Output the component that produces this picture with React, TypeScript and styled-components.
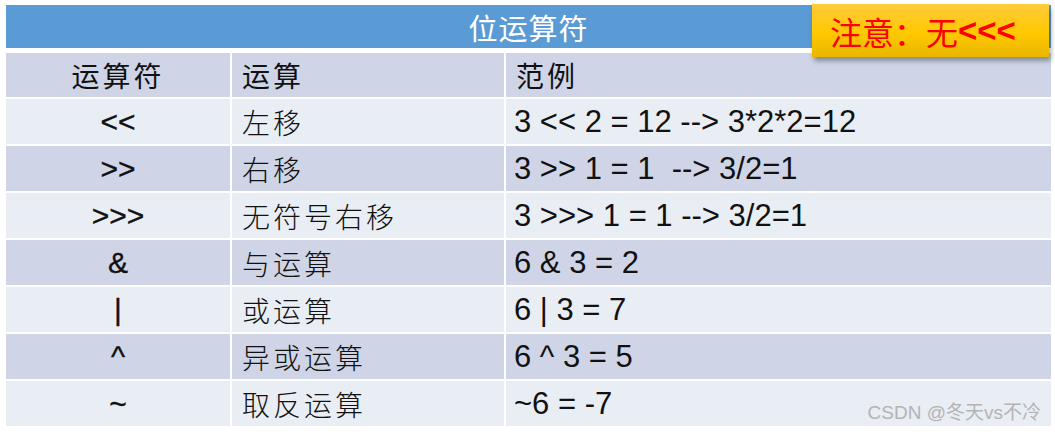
import React from "react";
import styled, { createGlobalStyle } from "styled-components";

const Global = createGlobalStyle`
  html, body { margin: 0; padding: 0; background: #ffffff; }
  body { width: 1055px; height: 432px; overflow: hidden; }
`;

const Page = styled.div`
  position: relative;
  width: 1055px;
  height: 432px;
  padding: 5px 4px 0 6px;
  box-sizing: border-box;
`;

const TitleBar = styled.div`
  height: 43px;
  margin-bottom: 5px;
  background: #5b9bd5;
  color: #ffffff;
  display: flex;
  align-items: center;
  justify-content: center;
  font-family: "Noto Sans CJK SC", sans-serif;
  font-size: 29px;
  letter-spacing: 1px;
`;

const Table = styled.div`
  display: grid;
  grid-template-columns: 224px 272px 545px;
  grid-template-rows: 44px repeat(7, 45px);
  column-gap: 2px;
  row-gap: 2px;
`;

const Cell = styled.div<{ $tone: "head" | "light" | "dark"; $center?: boolean; $kind: "op" | "cn" | "ex" }>`
  background: ${(p) => (p.$tone === "light" ? "#e9edf4" : "#cfd5e7")};
  color: #111111;
  display: flex;
  align-items: center;
  justify-content: ${(p) => (p.$center ? "center" : "flex-start")};
  padding-left: ${(p) => (p.$center ? "0" : p.$kind === "ex" ? "8px" : "10px")};
  font-family: ${(p) =>
    p.$kind === "cn" ? `"Noto Sans CJK SC", sans-serif` : `"Liberation Sans", Arial, sans-serif`};
  font-size: ${(p) => (p.$kind === "cn" ? "28px" : p.$kind === "ex" ? "31px" : "30px")};
  font-weight: ${(p) => (p.$kind === "cn" && p.$tone !== "head" ? 300 : 400)};
  letter-spacing: ${(p) => (p.$kind === "cn" ? "3px" : "0")};
  white-space: pre;
  -webkit-text-stroke: ${(p) => (p.$kind === "op" ? "0.35px #111" : "0")};
`;

const Note = styled.div`
  position: absolute;
  left: 812px;
  top: 4px;
  width: 237px;
  height: 53px;
  box-sizing: border-box;
  background: linear-gradient(#ffcb3c, #ffc800 55%, #e9b600);
  box-shadow: 2px 4px 5px rgba(0, 0, 0, 0.35);
  display: flex;
  align-items: center;
  padding-left: 18px;
  color: #ff0000;
  font-family: "Noto Sans CJK SC", sans-serif;
  font-size: 32px;
`;

const Arrows = styled.span`
  font-family: "Liberation Sans", Arial, sans-serif;
  font-weight: 700;
  font-size: 33px;
`;

const Watermark = styled.div`
  position: absolute;
  right: 14px;
  bottom: 8px;
  font-family: "Liberation Sans", "Noto Sans CJK SC", sans-serif;
  font-size: 19px;
  color: #b4b4b4;
`;

const rows: [string, string, string][] = [
  ["<<", "左移", "3 << 2 = 12 --> 3*2*2=12"],
  [">>", "右移", "3 >> 1 = 1  --> 3/2=1"],
  [">>>", "无符号右移", "3 >>> 1 = 1 --> 3/2=1"],
  ["&", "与运算", "6 & 3 = 2"],
  ["|", "或运算", "6 | 3 = 7"],
  ["^", "异或运算", "6 ^ 3 = 5"],
  ["~", "取反运算", "~6 = -7"],
];

export default function App() {
  return (
    <Page>
      <Global />
      <TitleBar>位运算符</TitleBar>
      <Table>
        <Cell $tone="head" $kind="cn" $center>运算符</Cell>
        <Cell $tone="head" $kind="cn">运算</Cell>
        <Cell $tone="head" $kind="cn">范例</Cell>
        {rows.map(([op, name, ex], i) => {
          const tone = i % 2 === 0 ? "light" : "dark";
          return (
            <React.Fragment key={op}>
              <Cell $tone={tone} $kind="op" $center>{op}</Cell>
              <Cell $tone={tone} $kind="cn">{name}</Cell>
              <Cell $tone={tone} $kind="ex">{ex}</Cell>
            </React.Fragment>
          );
        })}
      </Table>
      <Note>
        注意：无<Arrows>&lt;&lt;&lt;</Arrows>
      </Note>
      <Watermark>CSDN @冬天vs不冷</Watermark>
    </Page>
  );
}
